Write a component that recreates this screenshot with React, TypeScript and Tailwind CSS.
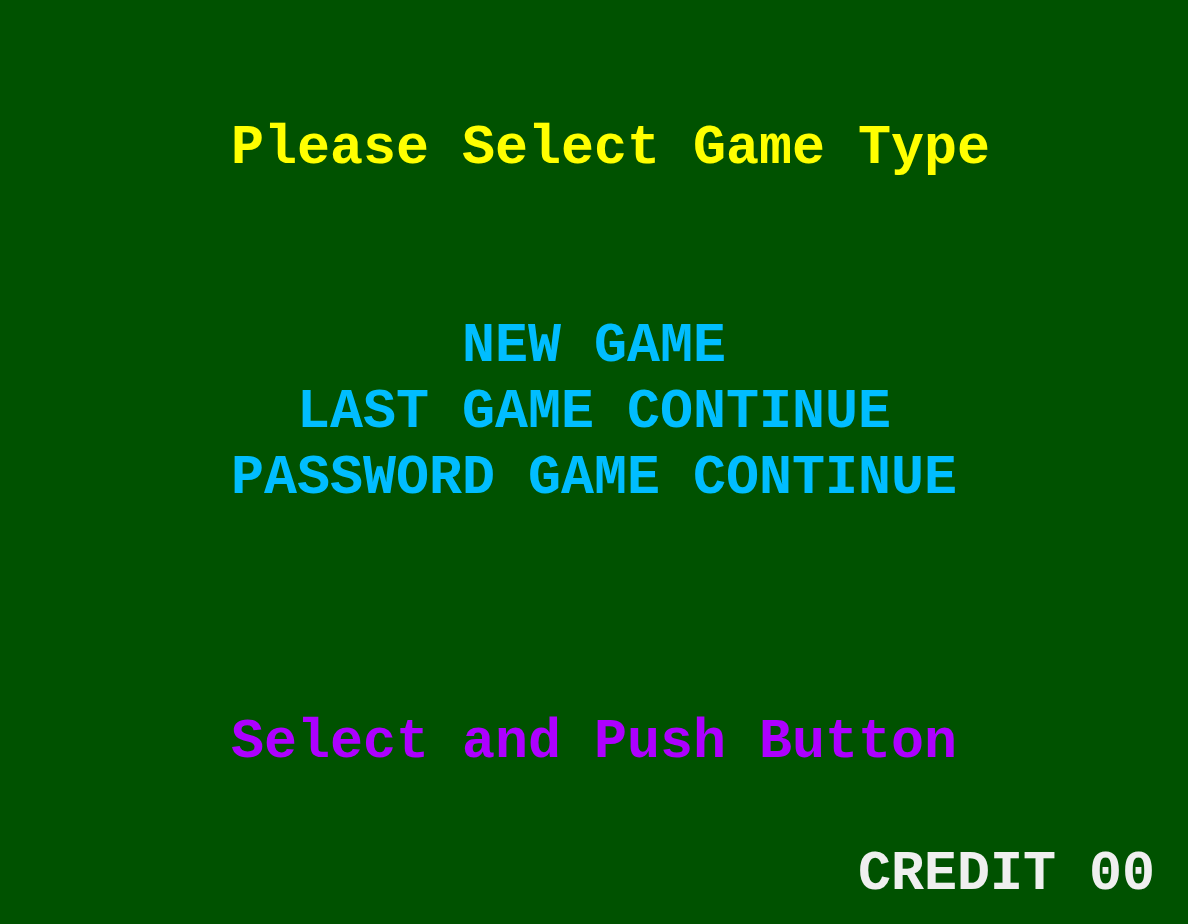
const menu: string[] = ["NEW GAME", "LAST GAME CONTINUE", "PASSWORD GAME CONTINUE"];

export default function App() {
  return (
    <main className="flex min-h-screen flex-col bg-[#005200] pt-[116px] font-['Liberation_Mono',monospace] text-[55px] font-bold leading-[66px] whitespace-pre">
      <div className="mx-auto flex w-[22ch] flex-col">
        <h1 className="text-[#ffff00]">Please Select Game Type</h1>
        <nav className="mt-[132px] flex flex-col items-center text-[#00bdff]">
          {menu.map((item) => (
            <button key={item} type="button" className="cursor-pointer">
              {item}
            </button>
          ))}
        </nav>
        <p className="mt-[198px] text-[#ad00ff]">Select and Push Button</p>
      </div>
      <footer className="mt-[66px] self-end pr-[33px] text-[#efefef]">CREDIT 00</footer>
    </main>
  );
}
